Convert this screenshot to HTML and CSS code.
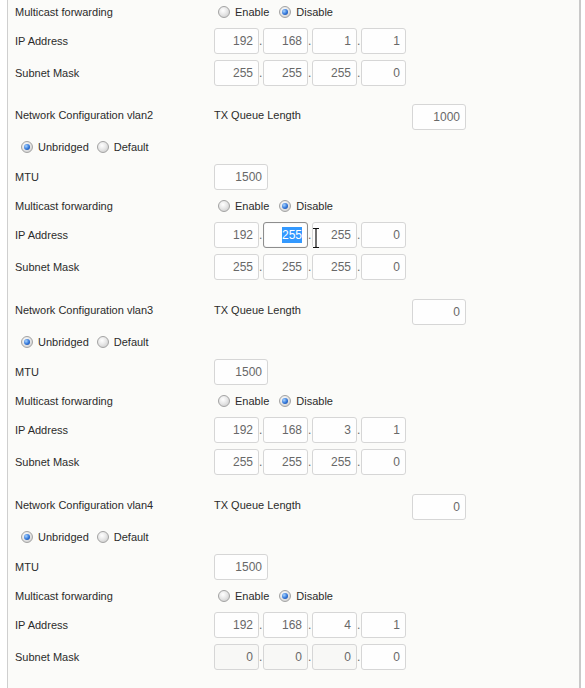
FILE: index.html
```html
<!DOCTYPE html>
<html>
<head>
<meta charset="utf-8">
<link rel="stylesheet" href="styles.css">
</head>
<body>
<div class="panel">

  <div class="row first">
    <span class="label">Multicast forwarding</span>
    <div class="ctl">
      <span class="opt"><span class="radio"></span>Enable</span>
      <span class="opt"><span class="radio on"></span>Disable</span>
    </div>
  </div>
  <div class="row ip">
    <span class="label">IP Address</span>
    <div class="ctl">
      <span class="box">192</span><span class="sep">.</span><span class="box">168</span><span class="sep">.</span><span class="box">1</span><span class="sep">.</span><span class="box">1</span>
    </div>
  </div>
  <div class="row sub">
    <span class="label">Subnet Mask</span>
    <div class="ctl">
      <span class="box">255</span><span class="sep">.</span><span class="box">255</span><span class="sep">.</span><span class="box">255</span><span class="sep">.</span><span class="box">0</span>
    </div>
  </div>

  <!-- vlan2 -->
  <div class="row vlan firstvlan">
    <span class="label">Network Configuration vlan2</span>
    <div class="ctl">
      <span class="txlabel">TX Queue Length</span><span class="box wide tx">1000</span>
    </div>
  </div>
  <div class="row bridge">
    <span class="opt"><span class="radio on"></span>Unbridged</span>
    <span class="opt"><span class="radio"></span>Default</span>
  </div>
  <div class="row mtu">
    <span class="label">MTU</span>
    <div class="ctl"><span class="box wide">1500</span></div>
  </div>
  <div class="row mc">
    <span class="label">Multicast forwarding</span>
    <div class="ctl">
      <span class="opt"><span class="radio"></span>Enable</span>
      <span class="opt"><span class="radio on"></span>Disable</span>
    </div>
  </div>
  <div class="row ip">
    <span class="label">IP Address</span>
    <div class="ctl cursor-host">
      <span class="box">192</span><span class="sep">.</span><span class="box focus"><span class="sel">255</span></span><span class="sep">.</span><span class="box">255</span><span class="sep">.</span><span class="box">0</span>
      <svg class="ibeam" width="8" height="22" viewBox="0 0 8 22">
        <path d="M1 1.5h2.5l0.5 0.8l0.5-0.8h2.5M4 2.3v17.4M1 20.5h2.5l0.5-0.8l0.5 0.8h2.5" fill="none" stroke="#fff" stroke-width="3"/>
        <path d="M1 1.5h2.5l0.5 0.8l0.5-0.8h2.5M4 2.3v17.4M1 20.5h2.5l0.5-0.8l0.5 0.8h2.5" fill="none" stroke="#111" stroke-width="1.2"/>
      </svg>
    </div>
  </div>
  <div class="row sub">
    <span class="label">Subnet Mask</span>
    <div class="ctl">
      <span class="box">255</span><span class="sep">.</span><span class="box">255</span><span class="sep">.</span><span class="box">255</span><span class="sep">.</span><span class="box">0</span>
    </div>
  </div>

  <!-- vlan3 -->
  <div class="row vlan">
    <span class="label">Network Configuration vlan3</span>
    <div class="ctl">
      <span class="txlabel">TX Queue Length</span><span class="box wide tx">0</span>
    </div>
  </div>
  <div class="row bridge">
    <span class="opt"><span class="radio on"></span>Unbridged</span>
    <span class="opt"><span class="radio"></span>Default</span>
  </div>
  <div class="row mtu">
    <span class="label">MTU</span>
    <div class="ctl"><span class="box wide">1500</span></div>
  </div>
  <div class="row mc">
    <span class="label">Multicast forwarding</span>
    <div class="ctl">
      <span class="opt"><span class="radio"></span>Enable</span>
      <span class="opt"><span class="radio on"></span>Disable</span>
    </div>
  </div>
  <div class="row ip">
    <span class="label">IP Address</span>
    <div class="ctl">
      <span class="box">192</span><span class="sep">.</span><span class="box">168</span><span class="sep">.</span><span class="box">3</span><span class="sep">.</span><span class="box">1</span>
    </div>
  </div>
  <div class="row sub">
    <span class="label">Subnet Mask</span>
    <div class="ctl">
      <span class="box">255</span><span class="sep">.</span><span class="box">255</span><span class="sep">.</span><span class="box">255</span><span class="sep">.</span><span class="box">0</span>
    </div>
  </div>

  <!-- vlan4 -->
  <div class="row vlan">
    <span class="label">Network Configuration vlan4</span>
    <div class="ctl">
      <span class="txlabel">TX Queue Length</span><span class="box wide tx">0</span>
    </div>
  </div>
  <div class="row bridge">
    <span class="opt"><span class="radio on"></span>Unbridged</span>
    <span class="opt"><span class="radio"></span>Default</span>
  </div>
  <div class="row mtu">
    <span class="label">MTU</span>
    <div class="ctl"><span class="box wide">1500</span></div>
  </div>
  <div class="row mc">
    <span class="label">Multicast forwarding</span>
    <div class="ctl">
      <span class="opt"><span class="radio"></span>Enable</span>
      <span class="opt"><span class="radio on"></span>Disable</span>
    </div>
  </div>
  <div class="row ip">
    <span class="label">IP Address</span>
    <div class="ctl">
      <span class="box">192</span><span class="sep">.</span><span class="box">168</span><span class="sep">.</span><span class="box">4</span><span class="sep">.</span><span class="box">1</span>
    </div>
  </div>
  <div class="row sub">
    <span class="label">Subnet Mask</span>
    <div class="ctl">
      <span class="box dim">0</span><span class="sep">.</span><span class="box dim">0</span><span class="sep">.</span><span class="box dim">0</span><span class="sep">.</span><span class="box">0</span>
    </div>
  </div>

</div>
</body>
</html>
```
FILE: styles.css
```css
html, body {
  margin: 0;
  padding: 0;
  background: #ffffff;
}

body {
  font-family: "Liberation Sans", Arial, sans-serif;
  font-size: 11px;
  color: #2b2b2b;
}

.panel {
  box-sizing: border-box;
  margin-left: 7px;
  width: 574px;
  min-height: 688px;
  border-left: 1px solid #cfcfcf;
  border-right: 2px solid #c9c9c9;
  background: #fbfbf9;
  padding-left: 7px;
  display: flex;
  flex-direction: column;
}

.row {
  height: 26px;
  display: flex;
  align-items: center;
  flex-shrink: 0;
}

.row.first { height: 24px; }
.row.ip { margin-top: 3px; }
.row.sub { margin-top: 6px; }
.row.first + .row.ip { margin-top: 4px; }
.row.vlan { margin-top: 17px; }
.row.vlan.firstvlan { margin-top: 16px; }
.row.bridge { margin-top: 6px; padding-left: 6px; }
.row.mtu { margin-top: 4px; }
.row.mc { margin-top: 3px; }

.label {
  width: 199px;
  flex-shrink: 0;
  white-space: nowrap;
}

.ctl {
  display: flex;
  align-items: center;
}

.cursor-host {
  position: relative;
  height: 26px;
}

.txlabel {
  width: 198px;
  flex-shrink: 0;
}

.opt {
  display: inline-flex;
  align-items: center;
  gap: 5px;
  margin-right: 10px;
}

.ctl .opt:first-child { margin-left: 4px; }
.row.bridge .opt { margin-right: 8px; }

.radio {
  box-sizing: border-box;
  width: 12px;
  height: 12px;
  border-radius: 50%;
  border: 1px solid #a3a3a3;
  background: radial-gradient(circle at 40% 35%, #ffffff 0, #e8e8e8 45%, #c6c6c6 100%);
  display: inline-flex;
  align-items: center;
  justify-content: center;
}

.radio.on::after {
  content: "";
  width: 6px;
  height: 6px;
  border-radius: 50%;
  background: radial-gradient(circle at 35% 35%, #a8d4ff 0, #2f74d8 55%, #173f8c 100%);
}

.box {
  box-sizing: border-box;
  width: 45px;
  height: 26px;
  border: 1px solid #d6d6d6;
  border-radius: 3px;
  background: #fefefe;
  text-align: right;
  padding-right: 5px;
  font-size: 12px;
  line-height: 24px;
  color: #686868;
  flex-shrink: 0;
}

.box.dim { background: #f8f8f6; }

.box.wide { width: 54px; }
.box.tx { margin-top: 4px; }

.box.focus {
  border-color: #8e8e8e;
  background: #ffffff;
  box-shadow: inset 0 0 1px rgba(0, 0, 0, 0.25);
}

.sel {
  background: #3399ff;
  color: #ffffff;
  padding: 1px 0;
}

.sep {
  width: 4px;
  font-size: 12px;
  line-height: 26px;
  color: #686868;
  text-align: left;
  flex-shrink: 0;
}

.ibeam {
  position: absolute;
  left: 98px;
  top: 5px;
}
```
